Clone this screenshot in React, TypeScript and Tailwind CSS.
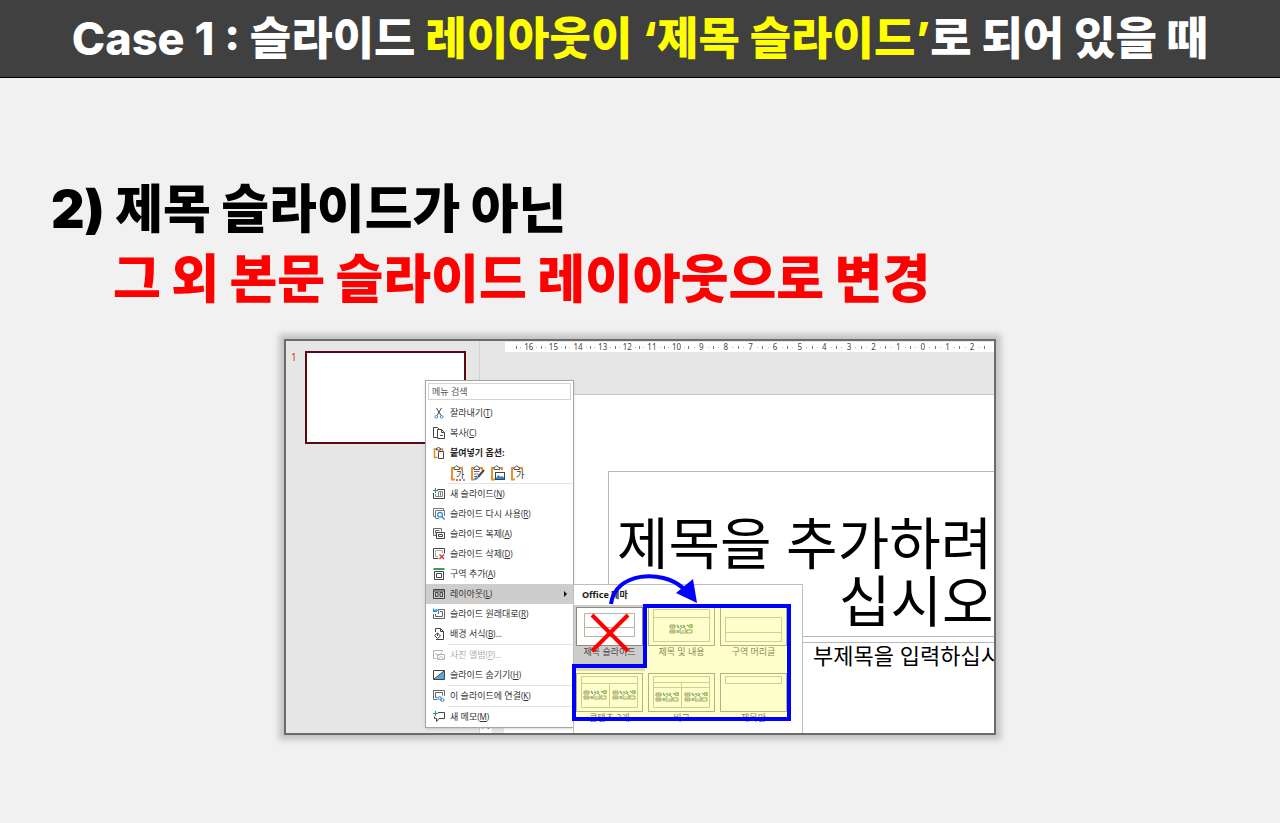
import React from 'react';

const iconBase = {
    width: 12,
    height: 12,
    viewBox: '0 0 12 12',
    fill: 'none',
    stroke: '#444',
    strokeWidth: 1,
    'aria-hidden': true
};

const icons = {
    cut: (
        <svg {...iconBase}>
            <path d="M3.5 1 L8 8.5 M8.5 1 L4 8.5" />
            <circle cx="3.3" cy="9.8" r="1.3" stroke="#2b88d8" />
            <circle cx="8.7" cy="9.8" r="1.3" stroke="#2b88d8" />
        </svg>
    ),
    copy: (
        <svg {...iconBase}>
            <path d="M4.5 10.5 H0.5 V0.5 H4.5 L6 2 M4.5 2.5 H8.5 L11.5 5.5 V11.5 H4.5 Z M8.5 2.5 V5.5 H11.5 M7 8.5 H10" />
        </svg>
    ),
    paste: (
        <svg {...iconBase}>
            <path d="M4.5 10.5 H1.5 V2 H3.5 M8 2 H9.5 V4" stroke="#e08a28" strokeWidth="1.5" />
            <path d="M3.5 3 V1.5 L5.5 0.5 L7.5 1.5 V3 Z M5.5 4.5 H10.5 V11.5 H5.5 Z" fill="#fff" />
        </svg>
    ),
    newSlide: (
        <svg {...iconBase}>
            <path d="M4.5 1.5 H11.5 V10.5 H0.5 V5" />
            <path d="M2.5 8.5 H9.5 V3.5 H5.5 V8 M2.5 6 V8.5 M7.5 3.5 V8.5" stroke="#888" />
            <path d="M2.5 0 V5 M0 2.5 H5" stroke="#3a9b57" strokeWidth="1.2" />
        </svg>
    ),
    reuse: (
        <svg {...iconBase}>
            <path d="M3 8.5 H0.5 V0.5 H10.5 V2 M2.5 10.5 V2.5 H11.5 V8 M2.5 10.5 H6" stroke="#777" />
            <circle cx="7" cy="6.8" r="2.4" stroke="#2b88d8" fill="#fff" strokeWidth="1.2" />
            <path d="M8.8 8.6 L11.5 11.5" stroke="#2b88d8" strokeWidth="1.4" />
        </svg>
    ),
    duplicate: (
        <svg {...iconBase}>
            <path d="M3 7.5 H0.5 V0.5 H8.5 V3.5 M2.5 5.5 V2.5 H6.5" stroke="#666" />
            <path d="M3.5 4.5 H11.5 V10.5 H3.5 Z M5.5 6.5 H9.5 V8.5 H5.5 Z" />
        </svg>
    ),
    remove: (
        <svg {...iconBase}>
            <path d="M5.5 10.5 H0.5 V0.5 H11.5 V5.5" />
            <path d="M2.5 2.5 H9.5 V5 M2.5 2.5 V8.5 H5" stroke="#aaa" />
            <path d="M6.5 6.5 L11 11 M11 6.5 L6.5 11" stroke="#d13438" strokeWidth="1.3" />
        </svg>
    ),
    section: (
        <svg {...iconBase}>
            <path d="M0.5 1 H11.5" stroke="#3a9b57" strokeWidth="2" />
            <path d="M1.5 3.5 H10.5 V11.5 H1.5 Z M3.5 5.5 H8.5 V9.5 H3.5 Z" />
        </svg>
    ),
    layout: (
        <svg {...iconBase}>
            <path d="M0.5 1.5 H11.5 V10.5 H0.5 Z M1 3 H11 M2.5 4.5 H5 V8.5 H2.5 Z M7 4.5 H9.5 V8.5 H7 Z" />
        </svg>
    ),
    reset: (
        <svg {...iconBase}>
            <path d="M5 1.5 H11.5 V10.5 H0.5 V6 M2.5 6 V8.5 H9.5 V3.5 H7" stroke="#666" />
            <path d="M0.5 0.5 V3.5 H4 M1 3.5 Q3 0.5 5.5 3 V6" stroke="#2b88d8" strokeWidth="1.2" />
        </svg>
    ),
    background: (
        <svg {...iconBase}>
            <path d="M2.5 4 V0.5 H7.5 L10.5 3.5 V11.5 H3 M7.5 0.5 V3.5 H10.5" />
            <path d="M1.5 7.5 L4.5 5 L7.5 8 L4.5 10.5 Z M4.5 5 V8" />
        </svg>
    ),
    album: (
        <svg {...iconBase} stroke="#b5b5b5">
            <path d="M3 9.5 H0.5 V1.5 H9.5 V3 M2 4 L5 7 L9 3.5 M4.5 5.5 H11.5 V10.5 H4.5 Z M5 10 L8 7.5 L11 10" />
        </svg>
    ),
    hide: (
        <svg {...iconBase}>
            <path d="M11 2 V10 H1.5 Z" fill="#5aa7e0" stroke="none" />
            <path d="M0.5 1.5 H11.5 V10.5 H0.5 Z M1 10 L11 2" />
        </svg>
    ),
    link: (
        <svg {...iconBase}>
            <path d="M4.5 9.5 H0.5 V0.5 H11.5 V6 M2.5 2.5 H9.5 V5.5 M2.5 2.5 V7.5 H4" stroke="#666" />
            <ellipse cx="6.7" cy="8" rx="1.8" ry="1.3" stroke="#2b88d8" />
            <ellipse cx="9.3" cy="10" rx="1.8" ry="1.3" stroke="#2b88d8" />
        </svg>
    ),
    comment: (
        <svg {...iconBase}>
            <path d="M5 1.5 H11.5 V7.5 H6 L3.5 10.5 V7.5 H1.5 V5.5" />
            <path d="M2.5 0 V5 M0 2.5 H5" stroke="#3a9b57" strokeWidth="1.2" />
        </svg>
    )
};

const editItems = [
    { label: '새 슬라이드', hotkey: 'N', icon: icons.newSlide },
    { label: '슬라이드 다시 사용', hotkey: 'R', icon: icons.reuse },
    { label: '슬라이드 복제', hotkey: 'A', icon: icons.duplicate },
    { label: '슬라이드 삭제', hotkey: 'D', icon: icons.remove },
    { label: '구역 추가', hotkey: 'A', icon: icons.section }
];

const rulerMarks = [16, 15, 14, 13, 12, 11, 10, 9, 8, 7, 6, 5, 4, 3, 2, 1, 0, 1, 2];

type ItemProps = {
    label: string;
    hotkey: string;
    icon: React.ReactNode;
    tail?: string;
    active?: boolean;
    disabled?: boolean;
};

const MenuItem = ({ label, hotkey, icon, tail, active, disabled }: ItemProps) => (
    <button
        type="button"
        disabled={disabled}
        className={`flex h-5 w-full shrink-0 items-center gap-[5px] pl-[7px] pr-[5px] text-left ${active ? 'bg-[#cfcdcc]' : ''} ${disabled ? 'text-[#b0b0b0]' : 'text-[#333]'}`}
    >
        {icon}
        <span className="flex-1 whitespace-nowrap">
            {label}
            <span className="text-[8px]">
                (<u>{hotkey}</u>){tail}
            </span>
        </span>
        {active && (
            <svg width="5" height="6" viewBox="0 0 5 6" aria-hidden="true">
                <path d="M1 0 L4 3 L1 6 Z" fill="#111" />
            </svg>
        )}
    </button>
);

const Divider = () => <div className="ml-[22px] h-px shrink-0 bg-[#e3e3e3]" />;

const PasteIcon = ({ kind }: { kind: 'theme' | 'source' | 'picture' | 'text' }) => (
    <svg width="16" height="16" viewBox="0 0 16 16" fill="none" aria-hidden="true">
        <path d="M5 14.5 H2 V3 H4 M9.5 3 H12 V5" stroke="#e8912d" strokeWidth="2" />
        <path d="M4 4.5 V2.5 L5.5 2 Q6.7 -0.8 8 2 L9.5 2.5 V4.5 Z" fill="#fff" stroke="#555" />
        {kind === 'source' && (
            <g>
                <path d="M4 6.5 H9.5 M4 11.5 H7" stroke="#d13438" />
                <path d="M4 9 H8.5" stroke="#2b88d8" />
                <path d="M8 12 L14 5" stroke="#444" strokeWidth="2" />
                <path d="M4 15 Q5 11.5 8 12 Q8.5 15 4 15" fill="#2b88d8" />
            </g>
        )}
        {kind === 'picture' && (
            <g>
                <rect x="5.5" y="7.5" width="9" height="7" fill="#fff" stroke="#444" />
                <path d="M6 13 L8.5 10 L10.5 12 L12 11 L14 12.5 V14 H6 Z" fill="#2b88d8" />
            </g>
        )}
        {(kind === 'theme' || kind === 'text') && (
            <text x="6" y="13" fontSize="9" fill="#333" fontFamily="Noto Sans CJK KR, sans-serif">
                가
            </text>
        )}
        {kind === 'theme' && (
            <g>
                <path d="M6 15 H11" stroke="#d13438" strokeWidth="1.5" strokeDasharray="2 1" />
                <path d="M13 15 H15" stroke="#2b88d8" strokeWidth="1.5" />
            </g>
        )}
    </svg>
);

const ContextMenu = () => (
    <div className="absolute left-[139px] top-[39px] flex w-[149px] flex-col border border-[#a6a6a6] bg-white text-[9px] leading-3 shadow-sm">
        <input
            type="text"
            aria-label="메뉴 검색"
            placeholder="메뉴 검색"
            className="mx-[2px] mt-[2px] mb-[3px] h-[17px] border border-[#d4d4d4] px-[3px] placeholder:text-[#555]"
        />
        <MenuItem label="잘라내기" hotkey="T" icon={icons.cut} />
        <MenuItem label="복사" hotkey="C" icon={icons.copy} />
        <div className="flex h-5 items-center gap-[5px] pl-[7px] font-bold text-[#222]">
            {icons.paste}
            <span>붙여넣기 옵션:</span>
        </div>
        <div className="flex h-5 items-center gap-1 pl-6">
            {(['theme', 'source', 'picture', 'text'] as const).map((kind) => (
                <button type="button" key={kind} aria-label={kind}>
                    <PasteIcon kind={kind} />
                </button>
            ))}
        </div>
        <Divider />
        {editItems.map((item) => (
            <MenuItem key={item.label} {...item} />
        ))}
        <MenuItem label="레이아웃" hotkey="L" icon={icons.layout} active />
        <MenuItem label="슬라이드 원래대로" hotkey="R" icon={icons.reset} />
        <MenuItem label="배경 서식" hotkey="B" tail="..." icon={icons.background} />
        <Divider />
        <MenuItem label="사진 앨범" hotkey="P" tail="..." icon={icons.album} disabled />
        <MenuItem label="슬라이드 숨기기" hotkey="H" icon={icons.hide} />
        <Divider />
        <MenuItem label="이 슬라이드에 연결" hotkey="K" icon={icons.link} />
        <Divider />
        <MenuItem label="새 메모" hotkey="M" icon={icons.comment} />
    </div>
);

// small cluster of content icons shown in the middle of a placeholder
const Cluster = ({ x, y }: { x: number; y: number }) => (
    <g transform={`translate(${x} ${y})`} fill="none">
        <path d="M1 1 H6 V4 H1 Z M1 6 H6 V9 H1 Z M11 5 L14 3 L17 5 V9 H11 Z M18 6 H23 V9 H18 Z" stroke="#77776a" />
        <path d="M1 2.5 H6 M1 7.5 H6 M3.5 1 V4 M3.5 6 V9 M12 7 H17 M8 6 V9" stroke="#99998a" />
        <path d="M8 1 L10 4 M9 6 V9 M14 1 L16 3 M12 1 V3" stroke="#2f8a9c" strokeWidth="1.5" />
        <path d="M18 1 L22 4 M20 1 H23 V4" stroke="#4f9d54" strokeWidth="1.5" />
    </g>
);

const layouts = [
    {
        name: '제목 슬라이드',
        art: <path d="M8.5 6.5 H58.5 V29.5 H8.5 Z M8.5 20.5 H58.5" />
    },
    {
        name: '제목 및 내용',
        art: (
            <>
                <path d="M5.5 2.5 H61.5 V34.5 H5.5 Z M5.5 10.5 H61.5" />
                <Cluster x={21} y={17} />
            </>
        )
    },
    {
        name: '구역 머리글',
        art: <path d="M5.5 10.5 H61.5 V34.5 H5.5 Z M5.5 25.5 H61.5" />
    },
    {
        name: '콘텐츠 2개',
        art: (
            <>
                <path d="M5.5 3.5 H61.5 V10.5 H5.5 Z M5.5 10.5 V34.5 H61.5 V10.5 M33.5 10.5 V34.5" />
                <Cluster x={7} y={17} />
                <Cluster x={36} y={17} />
            </>
        )
    },
    {
        name: '비교',
        art: (
            <>
                <path d="M5.5 3.5 H61.5 V34.5 H5.5 Z M5.5 9.5 H61.5 M5.5 14.5 H61.5 M33.5 9.5 V34.5" />
                <Cluster x={7} y={19} />
                <Cluster x={36} y={19} />
            </>
        )
    },
    {
        name: '제목만',
        art: <path d="M5.5 3.5 H61.5 V10.5 H5.5 Z" />
    }
];

const LayoutGallery = () => (
    <div className="absolute left-[287px] top-[243px] h-[160px] w-[230px] border border-[#bdbdbd] bg-white">
        <div className="flex h-5 items-center pl-2 text-[9px] font-bold text-[#222]">Office 테마</div>
        <div className="h-[117px] overflow-hidden">
            <div className="grid grid-cols-[72px_72px_72px]">
                {layouts.map((layout, idx) => (
                    <button
                        type="button"
                        key={layout.name}
                        className={`flex h-[66px] w-[71px] flex-col items-center pt-[2px] text-[9px] leading-3 text-[#444] ${idx === 0 ? 'bg-[#cfcdcc]' : ''}`}
                    >
                        <svg width="67" height="39" viewBox="0 0 67 39" fill="none" stroke="#b5b5a8" className="shrink-0" aria-hidden="true">
                            <rect x="0.5" y="0.5" width="66" height="38" fill="#fff" stroke="#8c8c80" />
                            {layout.art}
                        </svg>
                        <span>{layout.name}</span>
                    </button>
                ))}
            </div>
        </div>
    </div>
);

// highlight, cross and arrow drawn over the layout gallery
const Annotation = () => (
    <svg className="absolute left-[284px] top-[229px]" width="230" height="156" viewBox="0 0 230 156" fill="none" aria-hidden="true">
        <path d="M75 36 H219 V149 H4 V96 H75 Z" fill="#ffff66" fillOpacity="0.34" stroke="#0000ff" strokeWidth="4" />
        <path d="M22 45 L58 81 M58 45 L22 81" stroke="#ff0000" strokeWidth="4" />
        <path d="M41 34 C45 2 92 -1 113 18" stroke="#0000ff" strokeWidth="4" />
        <path d="M127 33 L106 23 L123 9 Z" fill="#0000ff" />
    </svg>
);

const Ruler = () => (
    <div className="ml-[25px] mt-px flex h-[10px] items-center bg-white pl-[11px] pr-[9px] text-[8px] leading-[10px] text-[#444]">
        {rulerMarks.map((mark, idx) => (
            <div key={idx} className="flex min-w-0 flex-1 items-center justify-between">
                <span className="h-[3px] w-px bg-[#777]" />
                <span className="size-px bg-[#bbb]" />
                <span>{mark}</span>
                <span className="size-px bg-[#bbb]" />
                <span />
            </div>
        ))}
        <span className="h-[3px] w-px bg-[#777]" />
    </div>
);

const EditorShot = () => (
    <div className="relative mx-auto flex min-h-[396px] w-full max-w-[712px] overflow-hidden border-2 border-[#6b6b6b] bg-[#e6e6e6] font-['Noto_Sans','Noto_Sans_CJK_KR',sans-serif]">
        <aside className="flex w-[194px] shrink-0 items-start gap-2 border-r border-[#d2d2d2] pl-[5px] pt-[10px]">
            <span className="w-[6px] text-[10px] leading-3 text-[#c43e1c]">1</span>
            <div className="h-[93px] w-[161px] border-2 border-[#5c0a12] bg-white" />
        </aside>
        <main className="flex min-w-0 flex-1 flex-col">
            <Ruler />
            <div className="mt-[42px] flex flex-1">
                <div className="mr-3 flex w-3 items-end justify-center bg-white text-[8px] leading-3 text-[#444]">
                    <span className="-rotate-90">2</span>
                </div>
                <div className="min-w-0 flex-1 border-t border-[#c8c8c8] bg-white pl-[104px] pt-[76px]">
                    <div className="border-y border-l border-[#b8b8b8] pt-[41px] pb-[7px] text-[56px] leading-[58px] text-black">
                        <p className="whitespace-nowrap pl-2">제목을 추가하려</p>
                        <p className="whitespace-nowrap pl-[230px]">십시오</p>
                    </div>
                    <div className="mt-[5px] border-t border-[#b8b8b8] pl-[205px] text-[22px] leading-6 text-black">
                        <p className="whitespace-nowrap">부제목을 입력하십시</p>
                    </div>
                </div>
            </div>
        </main>
        <ContextMenu />
        <LayoutGallery />
        <Annotation />
    </div>
);

const App = () => {
    return (
        <div className="min-h-screen bg-[#f1f1f1] font-['Inter','Noto_Sans_CJK_KR',sans-serif]">
            <header className="flex h-[78px] items-center justify-center border-b border-black bg-[#404040]">
                <h1 className="whitespace-nowrap text-[45px] font-extrabold leading-[56px] text-white">
                    Case 1 : 슬라이드 <span className="text-[#ffff00]">레이아웃이 ‘제목 슬라이드’</span>로 되어 있을 때
                </h1>
            </header>
            <section className="pt-[97px]">
                <h2 className="whitespace-nowrap pl-[51px] text-[52px] font-black leading-[70px] text-black">
                    2) 제목 슬라이드가 아닌
                    <span className="block pl-[62px] text-[#ff0000]">그 외 본문 슬라이드 레이아웃으로 변경</span>
                </h2>
                <div className="mx-auto mt-6 max-w-[712px] shadow-[0_0_6px_5px_#c4c4c4]">
                    <EditorShot />
                </div>
            </section>
        </div>
    );
};

export default App;
